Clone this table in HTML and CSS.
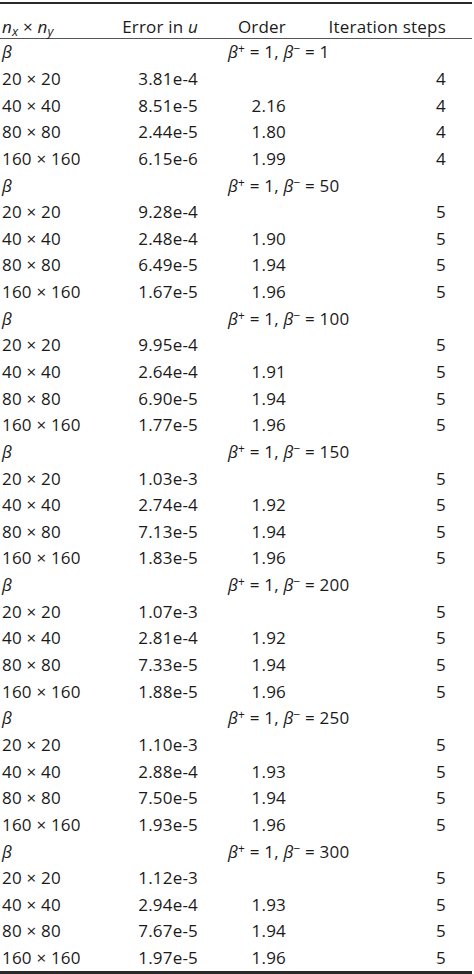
FILE: index.html
```html
<!DOCTYPE html>
<html>
<head>
<meta charset="utf-8">
<link rel="stylesheet" href="styles.css">
</head>
<body>
<table class="tbl">
<colgroup>
<col class="w1"><col class="w2"><col class="w3"><col class="w4"><col class="w5">
</colgroup>
<thead>
<tr class="head">
<th class="c1"><i>n</i><sub><i>x</i></sub> × <i>n</i><sub><i>y</i></sub></th>
<th class="c2">Error in <i>u</i></th>
<th class="c3">Order</th>
<th class="c4">Iteration steps</th>
<th></th>
</tr>
</thead>
<tbody id="body">
</tbody>
</table>
<script src="app.js"></script>
</body>
</html>
```
FILE: app.js
```js
const groups = [
  ["1", [["3.81e-4","","4"],["8.51e-5","2.16","4"],["2.44e-5","1.80","4"],["6.15e-6","1.99","4"]]],
  ["50", [["9.28e-4","","5"],["2.48e-4","1.90","5"],["6.49e-5","1.94","5"],["1.67e-5","1.96","5"]]],
  ["100", [["9.95e-4","","5"],["2.64e-4","1.91","5"],["6.90e-5","1.94","5"],["1.77e-5","1.96","5"]]],
  ["150", [["1.03e-3","","5"],["2.74e-4","1.92","5"],["7.13e-5","1.94","5"],["1.83e-5","1.96","5"]]],
  ["200", [["1.07e-3","","5"],["2.81e-4","1.92","5"],["7.33e-5","1.94","5"],["1.88e-5","1.96","5"]]],
  ["250", [["1.10e-3","","5"],["2.88e-4","1.93","5"],["7.50e-5","1.94","5"],["1.93e-5","1.96","5"]]],
  ["300", [["1.12e-3","","5"],["2.94e-4","1.93","5"],["7.67e-5","1.94","5"],["1.97e-5","1.96","5"]]]
];
const sizes = ["20 × 20","40 × 40","80 × 80","160 × 160"];
const body = document.getElementById("body");
let html = "";
for (const [b, rows] of groups) {
  html += '<tr class="grp"><td class="c1"><i>β</i></td><td class="gl" colspan="4"><i>β</i><sup>+</sup> = 1, <i>β</i><sup>−</sup> = ' + b + '</td></tr>';
  rows.forEach((r, i) => {
    html += '<tr><td class="c1">' + sizes[i] + '</td><td class="c2">' + r[0] + '</td><td class="c3">' + r[1] + '</td><td class="c4">' + r[2] + '</td><td></td></tr>';
  });
}
body.innerHTML = html;
```
FILE: styles.css
```css
html, body {
  margin: 0;
  padding: 0;
  background: #fff;
}
body {
  font-family: "Open Sans", "Noto Sans", sans-serif;
  font-size: 17px;
  letter-spacing: 0.2px;
  color: #1a1a1a;
}
.tbl {
  margin: 2px 0 0 0;
  width: 472px;
  border-collapse: collapse;
  table-layout: fixed;
  border-top: 2px solid #2a2a2a;
  border-bottom: 3px solid #2a2a2a;
}
.w1 { width: 110px; }
.w2 { width: 88px; }
.w3 { width: 88px; }
.w4 { width: 160px; }
.w5 { width: 26px; }
.tbl th, .tbl td {
  padding: 0;
  white-space: nowrap;
  font-weight: normal;
  line-height: 20px;
}
.head th {
  height: 33px;
  vertical-align: bottom;
  padding-bottom: 1px;
  border-bottom: 1px solid #555;
}
tbody td {
  height: 26.65px;
  vertical-align: middle;
}
.c1 { text-align: left; padding-left: 2px !important; }
.c2 { text-align: right; }
.c3 { text-align: right; }
.c4 { text-align: right; }
.gl {
  text-align: left;
  padding-left: 118px !important;
}
sub {
  font-size: 0.75em;
  vertical-align: -0.25em;
  line-height: 0;
}
sup {
  font-size: 0.7em;
  vertical-align: 0.45em;
  line-height: 0;
}
```
